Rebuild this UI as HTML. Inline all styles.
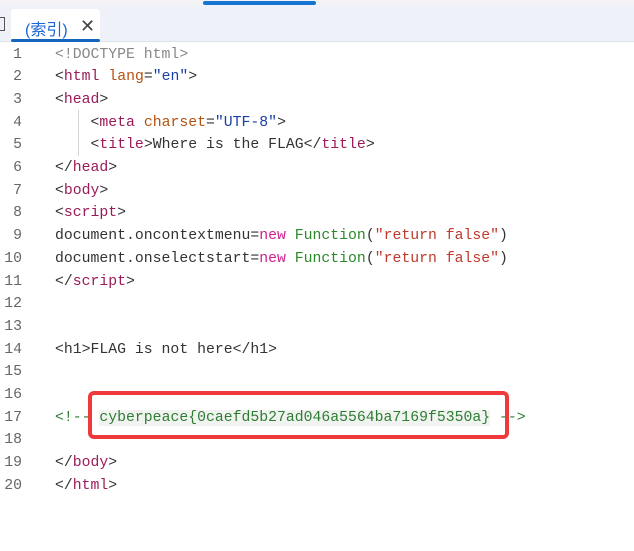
<!DOCTYPE html>
<html><head><meta charset="utf-8"><style>
body{margin:0;width:634px;height:551px;background:#fff;position:relative;overflow:hidden;font-family:"Liberation Mono",monospace;}
.top{position:absolute;left:0;top:0;width:634px;height:41px;background:#eef1f8;border-bottom:1px solid #dde3ee;}
.strip{position:absolute;left:0;top:0;width:634px;height:6px;background:#f3f3f5;}
.sb{position:absolute;left:203px;top:1px;width:113px;height:4px;background:#1576d2;border-radius:2px;}
.tab{position:absolute;left:11px;top:9px;width:89px;height:33px;background:#fff;border-radius:3px 3px 0 0;}
.tab span{position:absolute;left:14px;top:7px;font:16px "Liberation Sans","Noto Sans CJK SC",sans-serif;color:#1a66d2;}
.tab b{position:absolute;left:69px;top:7px;font:normal 18px "DejaVu Sans",sans-serif;color:#444;}
.tab i{position:absolute;left:0;bottom:0;width:89px;height:3px;background:#1565c0;border-radius:2px;}
.lines{position:absolute;left:0;top:43.5px;font-size:14.8px;line-height:22.7px;}
.ln{position:absolute;left:0;width:22px;text-align:right;color:#666;}
.cd{position:absolute;left:55px;white-space:pre;color:#333;}
.t{color:#9b1b5a}.a{color:#b5520f}.s{color:#1a3fa6}.g{color:#888}.k{color:#d0208a}.f{color:#2a8a2a}.r{color:#c0392b}.c{color:#2e7d32}
.box{position:absolute;left:88px;top:391px;width:413px;height:40px;border:4px solid #f0393a;border-radius:6px;}
.hl{background:#f1f3f1}
.guide{position:absolute;left:78px;top:110px;width:1px;height:46px;background:#d4d4d4;}
</style></head><body>
<div class="top"></div><div class="strip"></div><div class="sb"></div>
<div style="position:absolute;left:0;top:17px;width:4px;height:12px;border:1px solid #555;border-left:none"></div>
<div class="tab"><span>(索引)</span><b>✕</b><i></i></div>
<div class="guide"></div>
<div class="lines">
<div class="ln" style="top:0">1</div><div class="cd g" style="top:0">&lt;!DOCTYPE html&gt;</div>
<div class="ln" style="top:22.7px">2</div><div class="cd" style="top:22.7px">&lt;<span class="t">html</span> <span class="a">lang</span>=<span class="s">"en"</span>&gt;</div>
<div class="ln" style="top:45.4px">3</div><div class="cd" style="top:45.4px">&lt;<span class="t">head</span>&gt;</div>
<div class="ln" style="top:68.1px">4</div><div class="cd" style="top:68.1px">    &lt;<span class="t">meta</span> <span class="a">charset</span>=<span class="s">"UTF-8"</span>&gt;</div>
<div class="ln" style="top:90.8px">5</div><div class="cd" style="top:90.8px">    &lt;<span class="t">title</span>&gt;Where is the FLAG&lt;/<span class="t">title</span>&gt;</div>
<div class="ln" style="top:113.5px">6</div><div class="cd" style="top:113.5px">&lt;/<span class="t">head</span>&gt;</div>
<div class="ln" style="top:136.2px">7</div><div class="cd" style="top:136.2px">&lt;<span class="t">body</span>&gt;</div>
<div class="ln" style="top:158.9px">8</div><div class="cd" style="top:158.9px">&lt;<span class="t">script</span>&gt;</div>
<div class="ln" style="top:181.6px">9</div><div class="cd" style="top:181.6px">document.oncontextmenu=<span class="k">new</span> <span class="f">Function</span>(<span class="r">"return false"</span>)</div>
<div class="ln" style="top:204.3px">10</div><div class="cd" style="top:204.3px">document.onselectstart=<span class="k">new</span> <span class="f">Function</span>(<span class="r">"return false"</span>)</div>
<div class="ln" style="top:227px">11</div><div class="cd" style="top:227px">&lt;/<span class="t">script</span>&gt;</div>
<div class="ln" style="top:249.7px">12</div>
<div class="ln" style="top:272.4px">13</div>
<div class="ln" style="top:295.1px">14</div><div class="cd" style="top:295.1px">&lt;h1&gt;FLAG is not here&lt;/h1&gt;</div>
<div class="ln" style="top:317.8px">15</div>
<div class="ln" style="top:340.5px">16</div>
<div class="ln" style="top:363.2px">17</div><div class="cd c" style="top:363.2px">&lt;!-- <span class="hl">cyberpeace{0caefd5b27ad046a5564ba7169f5350a}</span> --&gt;</div>
<div class="ln" style="top:385.9px">18</div>
<div class="ln" style="top:408.6px">19</div><div class="cd" style="top:408.6px">&lt;/<span class="t">body</span>&gt;</div>
<div class="ln" style="top:431.3px">20</div><div class="cd" style="top:431.3px">&lt;/<span class="t">html</span>&gt;</div>
</div>
<div class="box"></div>
</body></html>
